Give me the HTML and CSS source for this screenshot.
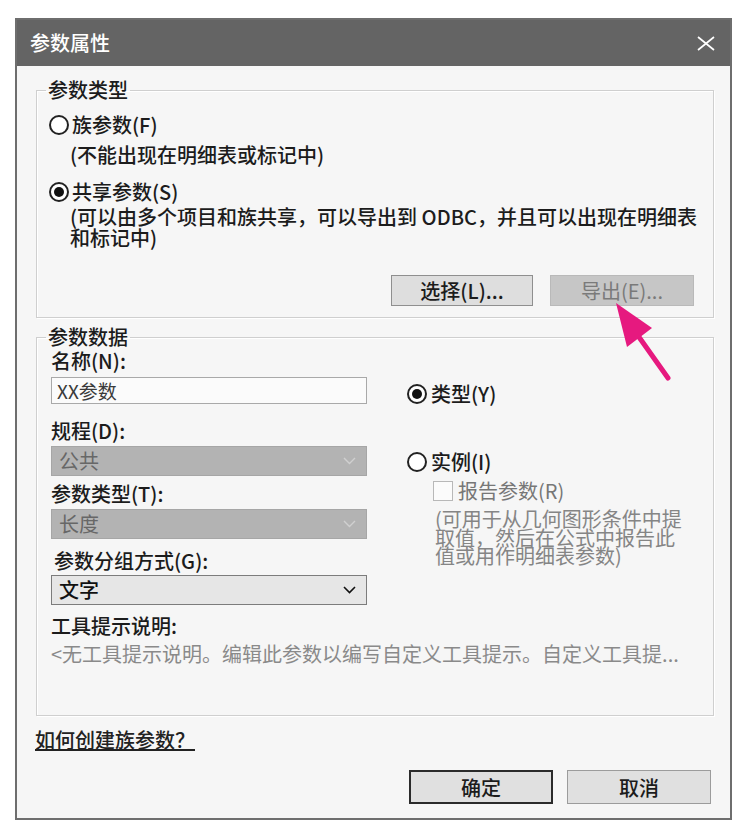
FILE: index.html
```html
<!DOCTYPE html>
<html lang="zh-CN">
<head>
<meta charset="utf-8">
<title>参数属性</title>
<link rel="stylesheet" href="styles.css">
</head>
<body>
<div class="dialog">
  <div class="titlebar">
    <span class="title">参数属性</span>
    <svg class="close" width="18" height="15" viewBox="0 0 18 15"><path d="M1 1 L17 14 M17 1 L1 14" stroke="#fff" stroke-width="1.7" fill="none"/></svg>
  </div>
  <div class="content">
    <fieldset class="group g1">
      <legend>参数类型</legend>
      <div class="radio-row"><span class="radio"></span><span>族参数(F)</span></div>
      <div class="desc">(不能出现在明细表或标记中)</div>
      <div class="radio-row r2"><span class="radio checked"></span><span>共享参数(S)</span></div>
      <div class="desc desc2">(可以由多个项目和族共享，可以导出到 ODBC，并且可以出现在明细表<br>和标记中)</div>
      <div class="btn-row">
        <div class="btn btn-select">选择(L)...</div>
        <div class="btn btn-disabled">导出(E)...</div>
      </div>
    </fieldset>
    <fieldset class="group g2">
      <legend>参数数据</legend>
      <div class="cols">
        <div class="col-left">
          <div class="label">名称(N):</div>
          <div class="input">XX参数</div>
          <div class="label l-gap1">规程(D):</div>
          <div class="select disabled"><span>公共</span><svg width="13" height="8" viewBox="0 0 13 8"><path d="M1 1 L6.5 6.5 L12 1" stroke="#d0d0d0" stroke-width="1.4" fill="none"/></svg></div>
          <div class="label l-gap2">参数类型(T):</div>
          <div class="select disabled"><span>长度</span><svg width="13" height="8" viewBox="0 0 13 8"><path d="M1 1 L6.5 6.5 L12 1" stroke="#d0d0d0" stroke-width="1.4" fill="none"/></svg></div>
          <div class="label l-gap3">参数分组方式(G):</div>
          <div class="select active"><span>文字</span><svg width="13" height="8" viewBox="0 0 13 8"><path d="M1 1 L6.5 6.5 L12 1" stroke="#111" stroke-width="1.6" fill="none"/></svg></div>
        </div>
        <div class="col-right">
          <div class="radio-row rr1"><span class="radio checked"></span><span>类型(Y)</span></div>
          <div class="radio-row rr2"><span class="radio"></span><span>实例(I)</span></div>
          <div class="check-row"><span class="checkbox"></span><span>报告参数(R)</span></div>
          <div class="note">(可用于从几何图形条件中提<br>取值，然后在公式中报告此<br>值或用作明细表参数)</div>
        </div>
      </div>
      <div class="label tip-label">工具提示说明:</div>
      <div class="tip-text">&lt;无工具提示说明。编辑此参数以编写自定义工具提示。自定义工具提...</div>
    </fieldset>
    <a class="help">如何创建族参数？</a>
    <div class="footer">
      <div class="btn btn-ok">确定</div>
      <div class="btn btn-cancel">取消</div>
    </div>
  </div>
</div>
<svg class="arrow" width="746" height="834" viewBox="0 0 746 834">
  <line x1="668" y1="378" x2="634" y2="330" stroke="#e6197f" stroke-width="5" stroke-linecap="round"/>
  <polygon points="616,303 652,328 627,347" fill="#e6197f"/>
</svg>
</body>
</html>
```
FILE: styles.css
```css
* { box-sizing: border-box; }
html, body { margin: 0; padding: 0; background: #ffffff; }
body {
  width: 746px;
  height: 834px;
  position: relative;
  overflow: hidden;
  font-family: "Noto Sans CJK SC", "Noto Sans", sans-serif;
  color: #1c1c1c;
}
.dialog {
  margin: 18px 0 0 15px;
  width: 717px;
  height: 802px;
  border: 2px solid #6e6e6e;
  background: #f6f6f6;
  display: flex;
  flex-direction: column;
}
.titlebar {
  height: 46px;
  flex: none;
  background: #646464;
  display: flex;
  align-items: center;
  justify-content: space-between;
  padding: 0 15px 0 13px;
  color: #fff;
}
.title { font-size: 20px; line-height: 24px; font-weight: 500; }
.close { display: block; }
.content {
  display: flex;
  flex-direction: column;
  padding: 0 16px 0 19px;
}
.group {
  margin: 0;
  border: 1px solid #cfcfcf;
  box-shadow: inset 1px 1px 0 #ffffff, 1px 1px 0 #ffffff;
  min-width: 0;
}
.group legend {
  font-size: 20px;
  line-height: 22px;
  padding: 0 2px;
  font-weight: 500;
  color: #1c1c1c;
}
.g1 { margin-top: 13px; padding: 12px 19px 11px 12px; }
.g1 legend { margin-left: -3px; }
.radio-row {
  display: flex;
  align-items: center;
  gap: 3px;
  height: 24px;
  font-size: 20px;
  line-height: 24px;
  font-weight: 500;
}
.radio {
  width: 20px;
  height: 20px;
  flex: none;
  border: 2px solid #222;
  border-radius: 50%;
  background: #fff;
  display: flex;
  align-items: center;
  justify-content: center;
}
.radio.checked::after {
  content: "";
  width: 10px;
  height: 10px;
  border-radius: 50%;
  background: #111;
}
.desc {
  font-size: 20px;
  line-height: 24px;
  margin-top: 6px;
  padding-left: 21px;
  font-weight: 500;
  white-space: nowrap;
}
.r2 { margin-top: 13px; }
.desc2 { line-height: 21px; margin-top: 2px; }
.btn-row {
  display: flex;
  justify-content: flex-end;
  gap: 17px;
  margin-top: 27px;
}
.btn {
  display: flex;
  align-items: center;
  justify-content: center;
  font-size: 20px;
  background: #dedede;
  border: 1px solid #8f8f8f;
  color: #1c1c1c;
}
.btn-select { width: 142px; height: 31px; font-weight: 500; }
.btn-disabled {
  width: 144px;
  height: 31px;
  background: #c6c6c6;
  border-color: #b9b9b9;
  color: #7a7a7a;
}
.g2 { margin-top: 8px; padding: 2px 15px 50px 14px; }
.g2 legend { margin-left: -5px; }
.cols { display: flex; gap: 40px; }
.col-left { width: 316px; flex: none; display: flex; flex-direction: column; }
.label {
  font-size: 20px;
  line-height: 22px;
  height: 22px;
  font-weight: 500;
  white-space: nowrap;
}
.input {
  margin-top: 5px;
  height: 27px;
  border: 1px solid #a9a9a9;
  background: #fbfbfb;
  padding-left: 5px;
  font-size: 19px;
  line-height: 25px;
  color: #3a3a3a;
}
.l-gap1 { margin-top: 16px; }
.l-gap2 { margin-top: 7px; }
.l-gap3 { margin-top: 11px; padding-left: 3px; }
.select {
  height: 30px;
  margin-top: 4px;
  display: flex;
  align-items: center;
  justify-content: space-between;
  padding: 0 10px 0 7px;
  font-size: 20px;
  line-height: 28px;
}
.select.disabled {
  background: #b3b3b3;
  border: 1px solid #a6a6a6;
  color: #676767;
}
.select.active {
  margin-top: 3px;
  background: #e6e6e6;
  border: 1px solid #7c7c7c;
  color: #111;
  font-weight: 500;
}
.col-right { display: flex; flex-direction: column; }
.rr1 { margin-top: 33px; height: 22px; gap: 4px; }
.rr2 { margin-top: 46px; height: 22px; gap: 4px; }
.check-row {
  margin-top: 7px;
  padding-left: 26px;
  height: 22px;
  display: flex;
  align-items: center;
  gap: 5px;
  font-size: 20px;
  line-height: 22px;
  color: #777;
}
.checkbox {
  width: 20px;
  height: 20px;
  flex: none;
  border: 1px solid #b8b8b8;
  background: #fbfbfb;
}
.note {
  margin-top: 8px;
  padding-left: 28px;
  font-size: 20px;
  line-height: 18.5px;
  color: #858585;
  white-space: nowrap;
}
.tip-label { margin-top: 10px; }
.tip-text {
  margin-top: 6px;
  font-size: 20px;
  line-height: 22px;
  color: #8a8a8a;
  white-space: nowrap;
}
.help {
  align-self: flex-start;
  margin-top: 13px;
  margin-left: -1px;
  font-size: 20px;
  line-height: 22px;
  color: #222;
  text-decoration: underline;
  font-weight: 500;
}
.footer {
  display: flex;
  justify-content: flex-end;
  gap: 14px;
  margin-top: 19px;
  padding-right: 3px;
}
.btn-ok, .btn-cancel { width: 144px; height: 34px; background: #e0e0e0; font-weight: 500; }
.btn-ok { border: 2px solid #2b2b2b; }
.btn-cancel { border: 1px solid #9c9c9c; }
.arrow { position: absolute; left: 0; top: 0; pointer-events: none; }
```
